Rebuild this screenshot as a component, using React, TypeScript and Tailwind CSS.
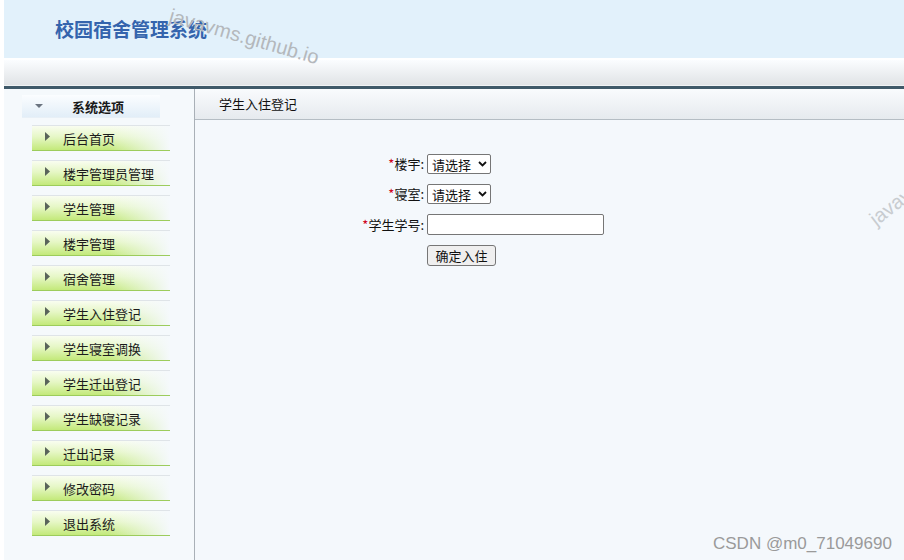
import React from "react";

const items = [
  "后台首页",
  "楼宇管理员管理",
  "学生管理",
  "楼宇管理",
  "宿舍管理",
  "学生入住登记",
  "学生寝室调换",
  "学生迁出登记",
  "学生缺寝记录",
  "迁出记录",
  "修改密码",
  "退出系统",
];

const cjk = { fontFamily: '"Noto Sans CJK SC", "Noto Sans", sans-serif' };

function FakeSelect() {
  return (
    <div className="ml-[3px] w-[64px] h-[20px] flex items-center border border-[#767676] rounded-[2px] bg-white pl-[4px] pr-[3px]">
      <span className="text-[13px] leading-none text-[#111]">请选择</span>
      <svg width="9" height="6" viewBox="0 0 9 6" className="ml-auto">
        <polyline points="1,1 4.5,4.5 8,1" fill="none" stroke="#111" strokeWidth="1.8" />
      </svg>
    </div>
  );
}

export default function App() {
  return (
    <div className="relative w-[904px] h-[560px] overflow-hidden bg-white pl-[4px]" style={cjk}>
      <div className="flex flex-col h-full bg-[#f4f8fc]">
        {/* header */}
        <div className="h-[58px] shrink-0 bg-[#e2f1fb] pl-[51px] pt-[15px]">
          <div className="text-[19px] font-bold leading-[28px] text-[#3464ad]" style={{ fontFamily: '"Noto Sans CJK SC", serif' }}>
            校园宿舍管理系统
          </div>
        </div>
        <div className="h-[2px] shrink-0 bg-white" />
        <div className="h-[26px] shrink-0 bg-[linear-gradient(to_bottom,#fbfdff,#e0e3e6)] border-b border-[#f0f2f4]" />
        <div className="h-[3px] shrink-0 bg-[#3f5969]" />
        {/* body */}
        <div className="flex flex-1 min-h-0">
          {/* sidebar */}
          <div className="w-[191px] shrink-0 border-r border-[#a9b0b7] bg-[#f5f9fc] pt-[6px]">
            <div className="ml-[18px] w-[138px] h-[23px] flex items-center bg-[linear-gradient(to_bottom,#fbfdff,#e2eef8)] border-b border-[#e8f0f7]">
              <svg width="8" height="5" viewBox="0 0 8 5" className="ml-[13px]">
                <polygon points="0,0 8,0 4,4" fill="#6b7480" />
              </svg>
              <span className="ml-[29px] text-[13px] font-bold text-[#1a1a1a] leading-none">系统选项</span>
            </div>
            <div className="mt-[7px] flex flex-col gap-[9px]">
              {items.map((t) => (
                <div
                  key={t}
                  className="ml-[28px] w-[138px] h-[26px] flex items-center border-t border-[#dfe4e8] border-b border-b-[#9ccc5c] bg-[linear-gradient(to_right,rgba(245,249,252,0)_55%,#f5f9fc_100%),linear-gradient(to_bottom,#f9fdf0_0%,#e6f7c6_45%,#c3e97a_100%)]"
                >
                  <svg width="5" height="9" viewBox="0 0 5 9" className="ml-[13px] -mt-[4px]">
                    <polygon points="0,0 5,4.5 0,9" fill="#59645a" />
                  </svg>
                  <span className="ml-[13px] text-[13px] text-[#1b1b1b] leading-none">{t}</span>
                </div>
              ))}
            </div>
          </div>
          {/* content */}
          <div className="flex-1 flex flex-col">
            <div className="h-[31px] shrink-0 flex items-center pl-[24px] bg-[linear-gradient(to_bottom,#f9fbfd,#e6eaee)] border-b border-[#b5bdc4]">
              <span className="text-[13px] text-[#111]">学生入住登记</span>
            </div>
            <div className="mt-[34px] flex flex-col gap-[10px]">
              <div className="flex items-center h-[20px]">
                <div className="w-[229px] text-right text-[13px] text-[#111]">
                  <span className="text-[#d0021b]">*</span>楼宇:
                </div>
                <FakeSelect />
              </div>
              <div className="flex items-center h-[20px]">
                <div className="w-[229px] text-right text-[13px] text-[#111]">
                  <span className="text-[#d0021b]">*</span>寝室:
                </div>
                <FakeSelect />
              </div>
              <div className="flex items-center h-[21px]">
                <div className="w-[229px] text-right text-[13px] text-[#111]">
                  <span className="text-[#d0021b]">*</span>学生学号:
                </div>
                <input className="ml-[3px] w-[177px] h-[21px] border border-[#767676] rounded-[2px] bg-white" />
              </div>
              <div className="flex items-center h-[21px]">
                <div className="w-[229px]" />
                <button className="ml-[3px] w-[69px] h-[21px] border border-[#767676] rounded-[3px] bg-[#efefef] text-[13px] text-[#111] leading-none">
                  确定入住
                </button>
              </div>
            </div>
          </div>
        </div>
      </div>
      {/* watermarks */}
      <div
        className="absolute left-[170px] top-[0px] text-[20px] text-[#b4b8bc] whitespace-nowrap origin-left rotate-[16deg] pointer-events-none"
        style={{ fontFamily: '"Liberation Sans", sans-serif' }}
      >
        javavms.github.io
      </div>
      <div
        className="absolute left-[872px] top-[206px] text-[20px] text-[#c8ccd0] whitespace-nowrap origin-left -rotate-[38deg] pointer-events-none"
        style={{ fontFamily: '"Liberation Sans", sans-serif' }}
      >
        javavms
      </div>
      <div
        className="absolute left-[713px] top-[531px] text-[17px] text-[#9a9a9a] whitespace-nowrap pointer-events-none"
        style={{ fontFamily: '"Liberation Sans", sans-serif' }}
      >
        CSDN @m0_71049690
      </div>
    </div>
  );
}
